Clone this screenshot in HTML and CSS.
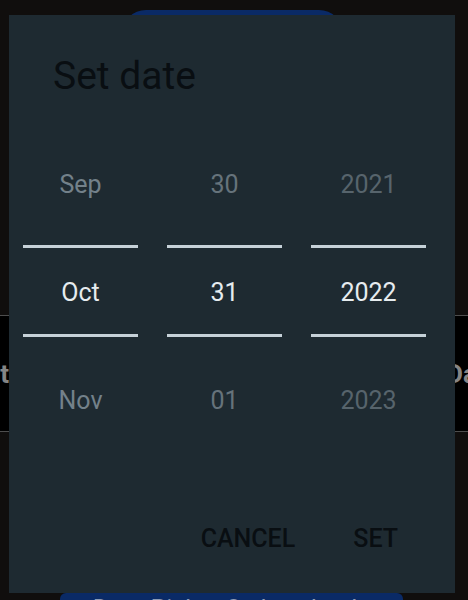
FILE: index.html
```html
<!DOCTYPE html>
<html lang="en">

<head>
    <meta charset="utf-8">
    <meta name="viewport" content="width=device-width, initial-scale=1">
    <title>Set date</title>
    <link rel="stylesheet" href="styles.css">
</head>

<body>

    <!-- MÀN HÌNH PHÍA SAU -->
    <main class="screen">
        <button class="pill-button top-button">Open Date Picker</button>

        <div class="field-row">
            <div class="field-left"><span>Start</span></div>
            <div class="field-right"><span>Date</span></div>
        </div>

        <button class="pill-button style-button">Date Picker Style: wheels</button>
    </main>

    <!-- HỘP THOẠI CHỌN NGÀY -->
    <div class="dialog" role="dialog" aria-label="Set date">
        <h1 class="dialog-title">Set date</h1>

        <div class="wheels">
            <div class="wheel month">
                <div class="cell cell-prev">Sep</div>
                <div class="divider"></div>
                <div class="cell cell-current">Oct</div>
                <div class="divider"></div>
                <div class="cell cell-next">Nov</div>
            </div>
            <div class="wheel day">
                <div class="cell cell-prev">30</div>
                <div class="divider"></div>
                <div class="cell cell-current">31</div>
                <div class="divider"></div>
                <div class="cell cell-next">01</div>
            </div>
            <div class="wheel year">
                <div class="cell cell-prev">2021</div>
                <div class="divider"></div>
                <div class="cell cell-current">2022</div>
                <div class="divider"></div>
                <div class="cell cell-next">2023</div>
            </div>
        </div>

        <div class="dialog-actions">
            <button class="text-button">CANCEL</button>
            <button class="text-button">SET</button>
        </div>
    </div>

</body>

</html>
```

FILE: styles.css
```css
* {
    box-sizing: border-box;
}

body {
    font-family: Roboto, "Noto Sans", sans-serif;
    background: #100e0d;
    margin: 0;
    padding: 0;
    width: 468px;
    height: 600px;
    overflow: hidden;
    position: relative;
}

/* Màn hình phía sau hộp thoại */
.screen {
    display: flex;
    flex-direction: column;
    height: 100%;
}

.screen > * {
    flex-shrink: 0;
}

.pill-button {
    border: none;
    background: #0a2a66;
    color: #8e9bb3;
    font-family: inherit;
    font-size: 25px;
    border-radius: 24px;
    height: 48px;
    padding: 0;
}

.top-button {
    margin: 10px 0 0 122px;
    width: 221px;
    color: transparent;
}

.field-row {
    margin-top: 257px;
    height: 117px;
    background: #000;
    border-top: 1px solid #4e4e4e;
    border-bottom: 1px solid #4e4e4e;
    display: flex;
    align-items: center;
    font-size: 26px;
    font-weight: bold;
    color: #858585;
    white-space: nowrap;
    overflow: hidden;
}

.field-left {
    width: 9px;
    display: flex;
    justify-content: flex-end;
}

.field-right {
    margin-left: auto;
    width: 22px;
}

.style-button {
    margin: 161px 0 0 60px;
    width: 343px;
    padding-top: 2px;
    border-radius: 6px;
    align-self: flex-start;
    display: flex;
    justify-content: center;
    align-items: flex-start;
}

/* Hộp thoại */
.dialog {
    position: absolute;
    top: 15px;
    left: 9px;
    width: 446px;
    height: 578px;
    background: #1e2a31;
    display: flex;
    flex-direction: column;
    padding: 42px 0 31px;
}

.dialog-title {
    margin: 0 0 0 44px;
    font-size: 39px;
    line-height: 39px;
    font-weight: normal;
    color: #090e12;
}

/* Các bánh xe chọn */
.wheels {
    display: flex;
    gap: 29px;
    padding-left: 14px;
    margin-top: 27px;
}

.wheel {
    width: 115px;
    display: flex;
    flex-direction: column;
    font-size: 25px;
}

.cell {
    display: flex;
    align-items: center;
    justify-content: center;
}

.cell-prev {
    height: 122px;
}

.cell-current {
    height: 86px;
    padding-top: 2px;
    color: #e6ecef;
}

.cell-next {
    height: 126px;
}

.month .cell-prev,
.month .cell-next {
    color: #73818a;
}

.day .cell-prev,
.day .cell-next {
    color: #66737b;
}

.year .cell-prev,
.year .cell-next {
    color: #57646c;
}

.divider {
    height: 3px;
    background: #c6d1d8;
}

/* Nút hành động */
.dialog-actions {
    margin-top: auto;
    display: flex;
    justify-content: flex-end;
    padding-right: 28px;
}

.text-button {
    background: none;
    border: none;
    font-family: inherit;
    font-size: 25px;
    line-height: 26px;
    font-weight: 500;
    color: #090e12;
    padding: 10px 29px;
}
```
